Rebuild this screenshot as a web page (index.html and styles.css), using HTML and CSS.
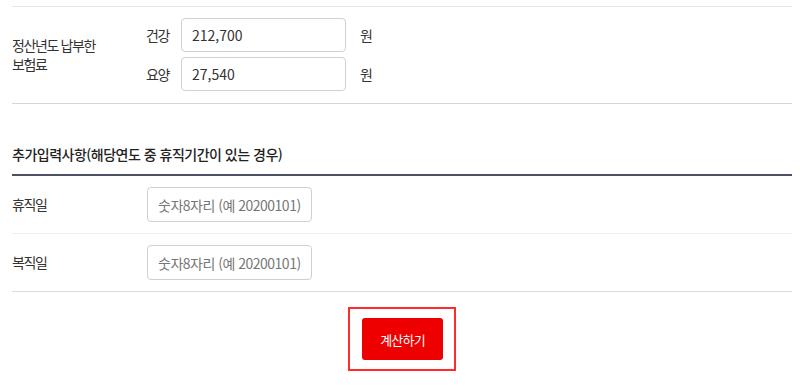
FILE: index.html
```html
<!DOCTYPE html>
<html lang="ko">
<head>
<meta charset="utf-8">
<title>계산하기</title>
<link rel="stylesheet" href="styles.css">
</head>
<body>
<div class="wrap">
  <div class="row row-ins">
    <div class="label">정산년도 납부한<br>보험료</div>
    <div class="ins-grid">
      <span class="sub">건강</span>
      <input class="field" type="text" value="212,700">
      <span class="unit">원</span>
      <span class="sub">요양</span>
      <input class="field" type="text" value="27,540">
      <span class="unit">원</span>
    </div>
  </div>

  <h3 class="heading">추가입력사항(해당연도 중 휴직기간이 있는 경우)</h3>

  <div class="row row-date">
    <div class="label">휴직일</div>
    <input class="field date" type="text" placeholder="숫자8자리 (예 20200101)">
  </div>
  <div class="row row-date last">
    <div class="label">복직일</div>
    <input class="field date" type="text" placeholder="숫자8자리 (예 20200101)">
  </div>

  <div class="actions">
    <span class="mark"><button class="btn" type="button">계산하기</button></span>
  </div>
</div>
</body>
</html>
```

FILE: styles.css
```css
html, body {
  margin: 0;
  padding: 0;
  background: #fff;
}
body {
  font-family: "Noto Sans CJK KR", "Noto Sans", sans-serif;
  color: #333;
  font-size: 14px;
}
.wrap {
  margin: 0 8px 0 12px;
  padding-top: 6px;
}
.row {
  display: flex;
  align-items: center;
}
.label {
  width: 134px;
  flex: none;
  font-size: 14px;
  line-height: 19px;
  letter-spacing: -1.4px;
  color: #333;
}
.row-ins {
  border-top: 1px solid #e6e6e6;
  border-bottom: 1px solid #d6d6d6;
  padding: 11px 0 12px;
}
.ins-grid {
  display: grid;
  grid-template-columns: 35px 165px auto;
  row-gap: 5px;
  align-items: center;
}
.sub {
  font-size: 14px;
  letter-spacing: -1.4px;
  color: #333;
}
.unit {
  margin-left: 14px;
  font-size: 14px;
  color: #333;
}
.field {
  box-sizing: border-box;
  width: 165px;
  height: 34px;
  margin: 0;
  padding: 0 10px;
  border: 1px solid #d0d0d0;
  border-radius: 4px;
  font-family: "Noto Sans CJK KR", "Noto Sans", sans-serif;
  font-size: 14px;
  color: #333;
  background: #fff;
  outline: none;
}
.field::placeholder {
  color: #777;
  letter-spacing: -0.5px;
}
.heading {
  margin: 39px 0 0;
  padding-bottom: 9px;
  font-size: 14px;
  line-height: 22px;
  font-weight: 500;
  letter-spacing: -0.5px;
  color: #222;
  border-bottom: 2px solid #4b5163;
}
.row-date {
  padding: 11px 0 11px;
  border-bottom: 1px solid #efefef;
}
.row-date .label {
  width: 135px;
}
.row-date.last {
  padding-top: 11px;
  border-bottom-color: #dcdcdc;
}
.date {
  height: 35px;
}
.actions {
  display: flex;
  justify-content: center;
  padding-top: 15px;
}
.mark {
  display: inline-block;
  border: 2px solid #ff2b2b;
  padding: 9px 11px 9px 12px;
}
.btn {
  display: block;
  width: 81px;
  height: 42px;
  border: 0;
  border-radius: 3px;
  background: #ee0000;
  color: #fff;
  font-family: "Noto Sans CJK KR", "Noto Sans", sans-serif;
  font-size: 13px;
  letter-spacing: -0.8px;
  cursor: pointer;
}
```
